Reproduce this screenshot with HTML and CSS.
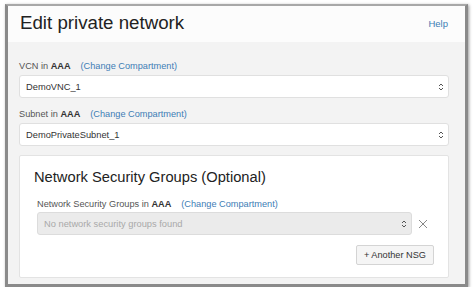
FILE: index.html
```html
<!DOCTYPE html>
<html lang="en">
<head>
  <meta charset="UTF-8">
  <meta name="viewport" content="width=device-width, initial-scale=1.0">
  <title>Edit private network</title>
  <link rel="stylesheet" href="styles.css">
</head>
<body>
  <div class="dialog">
    <div class="dialog-header">
      <h1 class="title">Edit private network</h1>
      <a class="help" href="#">Help</a>
    </div>

    <div class="dialog-body">
      <div class="field">
        <div class="field-label">VCN in <b>AAA</b><a class="link" href="#">(Change Compartment)</a></div>
        <div class="select">
          <span>DemoVNC_1</span>
          <svg class="caret" width="6" height="10" viewBox="0 0 6 10"><path d="M1 4L3 2L5 4M1 6L3 8L5 6"/></svg>
        </div>
      </div>

      <div class="field">
        <div class="field-label">Subnet in <b>AAA</b><a class="link" href="#">(Change Compartment)</a></div>
        <div class="select">
          <span>DemoPrivateSubnet_1</span>
          <svg class="caret" width="6" height="10" viewBox="0 0 6 10"><path d="M1 4L3 2L5 4M1 6L3 8L5 6"/></svg>
        </div>
      </div>

      <div class="panel">
        <h2 class="panel-title">Network Security Groups (Optional)</h2>
        <div class="field-label">Network Security Groups in <b>AAA</b><a class="link" href="#">(Change Compartment)</a></div>
        <div class="nsg-row">
          <div class="select disabled">
            <span>No network security groups found</span>
            <svg class="caret" width="6" height="10" viewBox="0 0 6 10"><path d="M1 4L3 2L5 4M1 6L3 8L5 6"/></svg>
          </div>
          <svg class="remove" width="10" height="10" viewBox="0 0 10 10"><path d="M1 1L9 9M9 1L1 9"/></svg>
        </div>
        <div class="panel-actions">
          <button type="button">+ Another NSG</button>
        </div>
      </div>
    </div>
  </div>
</body>
</html>
```

FILE: styles.css
```css
body {
  font-family: "Liberation Sans", Arial, Helvetica, sans-serif;
  background-color: #ffffff;
  margin: 0;
}
.dialog {
  margin: 4px 0 0 5px;
  width: 463px;
  height: 283px;
  box-sizing: border-box;
  border: 3px solid #8a8a8a;
  border-top: 2px solid #a8a8a8;
  box-shadow: 1px 1px 3px rgba(0, 0, 0, 0.4);
  display: flex;
  flex-direction: column;
}
.dialog-header {
  height: 36px;
  box-sizing: border-box;
  background-color: #fcfcfc;
  display: flex;
  align-items: center;
  justify-content: space-between;
  padding: 0 17px 2px 12px;
}
.title {
  font-size: 18.7px;
  font-weight: normal;
  color: #222;
  margin: 0;
}
.help {
  font-size: 9.5px;
  color: #3d7db5;
  text-decoration: none;
}
.dialog-body {
  flex: 1;
  background-color: #f3f3f3;
  padding: 17px 16px 0 11px;
}
.field + .field {
  margin-top: 9px;
}
.field-label {
  font-size: 9.2px;
  line-height: 14px;
  color: #555;
  margin-bottom: 2px;
}
.field-label b {
  color: #333;
}
.link {
  color: #3d7db5;
  text-decoration: none;
  margin-left: 10px;
}
.select {
  height: 23px;
  box-sizing: border-box;
  background-color: #fff;
  border: 1px solid #e0e0e0;
  border-radius: 3px;
  display: flex;
  align-items: center;
  justify-content: space-between;
  padding: 0 4px 0 6px;
  font-size: 9.3px;
  color: #333;
}
.caret path {
  fill: none;
  stroke: #555;
  stroke-width: 1;
}
.panel {
  margin-top: 9px;
  background-color: #fff;
  border: 1px solid #e3e3e3;
  border-radius: 2px;
  padding: 12px 14px 12px 17px;
}
.panel-title {
  font-size: 14.7px;
  font-weight: normal;
  line-height: 18px;
  color: #222;
  margin: 0 0 11px -3px;
}
.panel .field-label {
  margin-bottom: 1px;
}
.nsg-row {
  display: flex;
  align-items: center;
}
.nsg-row .select {
  width: 375px;
}
.select.disabled {
  background-color: #ebebeb;
  border-color: #dcdcdc;
  color: #a9a9a9;
}
.remove {
  margin-left: 6px;
}
.remove path {
  stroke: #888;
  stroke-width: 1;
}
.panel-actions {
  display: flex;
  justify-content: flex-end;
  margin-top: 10px;
}
button {
  height: 20px;
  padding: 0 7px;
  font-family: inherit;
  font-size: 9.2px;
  color: #333;
  background-color: #f5f5f5;
  border: 1px solid #d4d4d4;
  border-radius: 2px;
}
```
